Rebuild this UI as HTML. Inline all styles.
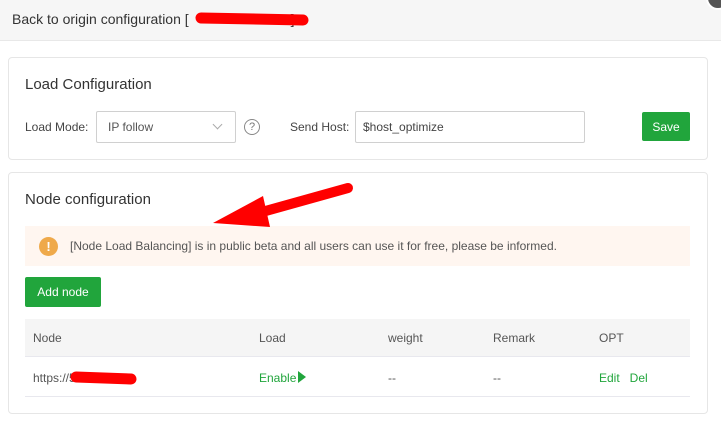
<!DOCTYPE html>
<html><head><meta charset="utf-8"><style>
body{margin:0;width:721px;height:425px;background:#fff;font-family:"Liberation Sans",sans-serif;color:#333;position:relative;overflow:hidden;font-size:12px}
.abs{position:absolute}
.card{position:absolute;left:8px;width:698px;border:1px solid #e6e6e6;border-radius:4px;background:#fff}
</style></head><body>
<div class="abs" style="left:0;top:0;width:721px;height:40px;background:#f6f6f6;border-bottom:1px solid #e8e8e8"></div>
<div class="abs" style="left:12px;top:11px;font-size:14px;color:#333">Back to origin configuration [<span style="display:inline-block;width:102px"></span>]</div>
<div class="abs" style="left:706px;top:-14px;width:20px;height:20px;border-radius:50%;background:#555;border:2px solid #fff"></div>

<div class="card" style="top:57px;height:101px"></div>
<div class="abs" style="left:25px;top:76px;font-size:15px;color:#333">Load Configuration</div>
<div class="abs" style="left:25px;top:120px;color:#444">Load Mode:</div>
<div class="abs" style="left:96px;top:111px;width:138px;height:30px;border:1px solid #d0d0d0;border-radius:2px"></div>
<div class="abs" style="left:108px;top:120px;color:#555">IP follow</div>
<div class="abs" style="left:214px;top:121px;width:6px;height:6px;border-right:1px solid #aaa;border-bottom:1px solid #aaa;transform:rotate(45deg)"></div>
<div class="abs" style="left:244px;top:119px;width:14px;height:14px;border:1px solid #888;border-radius:50%;text-align:center;line-height:14px;font-size:11px;color:#777">?</div>
<div class="abs" style="left:290px;top:120px;color:#444">Send Host:</div>
<div class="abs" style="left:355px;top:111px;width:228px;height:30px;border:1px solid #d0d0d0;border-radius:2px"></div>
<div class="abs" style="left:363px;top:120px;color:#444">$host_optimize</div>
<div class="abs" style="left:642px;top:112px;width:48px;height:29px;background:#21a53c;border-radius:2px;color:#fff;text-align:center;line-height:31px">Save</div>

<div class="card" style="top:172px;height:240px"></div>
<div class="abs" style="left:25px;top:191px;font-size:15px;color:#333">Node configuration</div>
<div class="abs" style="left:25px;top:226px;width:665px;height:40px;background:#fff6f0"></div>
<div class="abs" style="left:39px;top:237px;width:19px;height:19px;border-radius:50%;background:#efa94a;color:#fff;font-weight:bold;text-align:center;line-height:19px;font-size:13px">!</div>
<div class="abs" style="left:70px;top:239px;color:#555">[Node Load Balancing] is in public beta and all users can use it for free, please be informed.</div>
<div class="abs" style="left:25px;top:277px;width:76px;height:30px;background:#21a53c;border-radius:2px;color:#fff;text-align:center;line-height:30px">Add node</div>
<div class="abs" style="left:25px;top:319px;width:665px;height:37px;background:#f5f5f5;border-bottom:1px solid #e8e8ee"></div>
<div class="abs" style="left:25px;top:356px;width:665px;height:40px;border-bottom:1px solid #e8e8ee"></div>
<div class="abs" style="left:33px;top:331px;color:#555">Node</div>
<div class="abs" style="left:259px;top:331px;color:#555">Load</div>
<div class="abs" style="left:388px;top:331px;color:#555">weight</div>
<div class="abs" style="left:493px;top:331px;color:#555">Remark</div>
<div class="abs" style="left:599px;top:331px;color:#555">OPT</div>
<div class="abs" style="left:33px;top:371px;color:#555">https://5</div>
<div class="abs" style="left:259px;top:371px;color:#21a53c">Enable</div>
<div class="abs" style="left:388px;top:371px;color:#555">--</div>
<div class="abs" style="left:493px;top:371px;color:#555">--</div>
<div class="abs" style="left:599px;top:371px;color:#21a53c">Edit&nbsp;&nbsp;&nbsp;Del</div>

<svg class="abs" style="left:0;top:0" width="721" height="425">
<path d="M201 18 L303 20" stroke="#f00" stroke-width="11" stroke-linecap="round"/>
<path d="M76 377 L131 379" stroke="#f00" stroke-width="11" stroke-linecap="round"/>
<path d="M348 188 L262 212" stroke="#f00" stroke-width="10" stroke-linecap="round"/>
<path d="M213 223 L263 196 L270 227 Z" fill="#f00"/>
<path d="M298 371 L306 377 L298 383 Z" fill="#21a53c"/>
</svg>
</body></html>
